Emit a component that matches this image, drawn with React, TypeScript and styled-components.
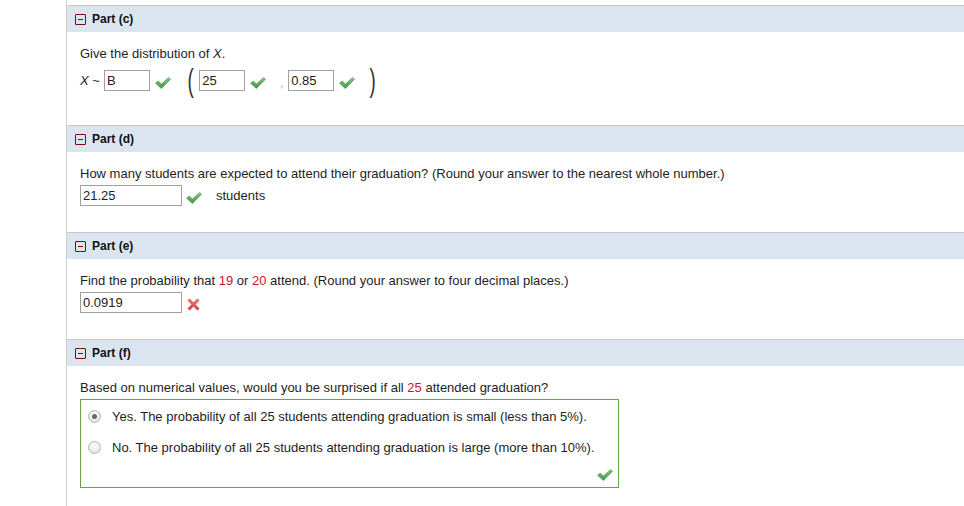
import React from "react";
import styled, { createGlobalStyle } from "styled-components";

const Global = createGlobalStyle`
  html, body { margin: 0; padding: 0; background: #fff; }
  body { font-family: "Liberation Sans", Arial, sans-serif; font-size: 13px; color: #1e1e1e; }
`;

const Page = styled.div`
  margin-left: 66px;
  border-left: 1px solid #cfcfcf;
  min-height: 506px;
  padding-top: 5px;
  box-sizing: border-box;
`;

const Section = styled.section``;

const Header = styled.div`
  border-top: 1px solid #c8c8c8;
  background: #dae5ef;
  height: 26px;
  display: flex;
  align-items: center;
  padding-left: 8px;
  font-size: 12px;
  font-weight: bold;
  color: #111;
`;

const Minus = styled.span`
  width: 9px;
  height: 9px;
  border: 1px solid #7a0a0a;
  border-radius: 1px;
  margin-right: 6px;
  position: relative;
  display: inline-block;
  &::after {
    content: "";
    position: absolute;
    left: 2px;
    right: 2px;
    top: 4px;
    height: 1px;
    background: #7a0a0a;
  }
`;

const Body = styled.div`
  padding: 14px 13px 26px;
`;

const Line = styled.div`
  line-height: 16px;
  height: 16px;
  white-space: nowrap;
`;

const Red = styled.span`
  color: #d0112b;
`;

const Row = styled.div`
  display: flex;
  align-items: center;
  height: 31px;
  margin: 3px 0;
`;

const InputRow = styled.div`
  display: flex;
  align-items: center;
  margin-top: 3px;
  height: 21px;
`;

const Field = styled.div<{ $w: number }>`
  width: ${(p) => p.$w}px;
  height: 21px;
  box-sizing: border-box;
  border: 1px solid #a0a0a0;
  padding: 0 2px;
  line-height: 19px;
  font-size: 13px;
  color: #222;
  background: #fff;
`;

const Italic = styled.i``;

const Label = styled.span<{ $ml?: number; $mr?: number }>`
  margin-left: ${(p) => p.$ml ?? 0}px;
  margin-right: ${(p) => p.$mr ?? 0}px;
`;

const Paren = styled.span<{ $ml: number; $mr: number }>`
  display: inline-block;
  font-size: 22px;
  font-weight: 300;
  color: #333;
  transform: scale(0.85, 1.45);
  margin-left: ${(p) => p.$ml}px;
  margin-right: ${(p) => p.$mr}px;
  line-height: 22px;
`;

const Comma = styled.span`
  color: #888;
  font-size: 11px;
  margin: 4px 5px 0 0;
`;

const IconWrap = styled.span<{ $ml: number; $mr?: number; $dy?: number }>`
  display: inline-flex;
  margin-left: ${(p) => p.$ml}px;
  margin-right: ${(p) => p.$mr ?? 0}px;
  position: relative;
  top: ${(p) => p.$dy ?? 0}px;
`;

const Check = ({ ml, mr, dy }: { ml: number; mr?: number; dy?: number }) => (
  <IconWrap $ml={ml} $mr={mr} $dy={dy}>
    <svg width="16" height="12" viewBox="0 0 16 12">
      <defs>
        <linearGradient id="cg" x1="0" y1="0" x2="0" y2="1">
          <stop offset="0" stopColor="#86c986" />
          <stop offset="1" stopColor="#3f943f" />
        </linearGradient>
      </defs>
      <path d="M0.5 6.2 L3.2 4 L6.4 6.9 L13.6 0.4 L15.6 2.2 L6.4 11.6 Z" fill="url(#cg)" stroke="#4a9a4a" strokeWidth="0.6" strokeLinejoin="round" />
    </svg>
  </IconWrap>
);

const Cross = ({ ml, dy }: { ml: number; dy?: number }) => (
  <IconWrap $ml={ml} $dy={dy}>
    <svg width="13" height="13" viewBox="0 0 13 13">
      <defs>
        <linearGradient id="xg" x1="0" y1="0" x2="0" y2="1">
          <stop offset="0" stopColor="#f87a7a" />
          <stop offset="1" stopColor="#e0353b" />
        </linearGradient>
      </defs>
      <path
        d="M0.8 2.6 L2.6 0.8 L6.5 4.7 L10.4 0.8 L12.2 2.6 L8.3 6.5 L12.2 10.4 L10.4 12.2 L6.5 8.3 L2.6 12.2 L0.8 10.4 L4.7 6.5 Z"
        fill="url(#xg)"
        stroke="#d9474c"
        strokeWidth="0.5"
        strokeLinejoin="round"
      />
    </svg>
  </IconWrap>
);

const ChoiceBox = styled.div`
  margin-top: 3px;
  width: 539px;
  height: 89px;
  box-sizing: border-box;
  border: 1px solid #6aa341;
  padding: 6px 0 6px 7px;
  display: flex;
  flex-direction: column;
`;

const Choice = styled.div`
  display: flex;
  align-items: center;
  height: 20px;
  & + & {
    margin-top: 11px;
  }
`;

const Radio = styled.span<{ $checked?: boolean }>`
  width: 11px;
  height: 11px;
  border-radius: 50%;
  border: 1px solid #b5b5b5;
  background: radial-gradient(circle at 50% 35%, #ffffff 0%, #e6e6e6 70%, #d4d4d4 100%);
  margin-right: 11px;
  position: relative;
  display: inline-block;
  &::after {
    content: "";
    display: ${(p) => (p.$checked ? "block" : "none")};
    position: absolute;
    width: 5px;
    height: 5px;
    border-radius: 50%;
    background: #6a6a6a;
    left: 3px;
    top: 3px;
  }
`;

const BoxFoot = styled.div`
  margin-top: auto;
  display: flex;
  justify-content: flex-end;
  padding-right: 5px;
`;

function SectionHead({ label }: { label: string }) {
  return (
    <Header>
      <Minus />
      {label}
    </Header>
  );
}

export default function App() {
  return (
    <>
      <Global />
      <Page>
        <Section>
          <SectionHead label="Part (c)" />
          <Body>
            <Line>
              Give the distribution of <Italic>X</Italic>.
            </Line>
            <Row>
              <Label $mr={4}>
                <Italic>X</Italic> ~
              </Label>
              <Field $w={46}>B</Field>
              <Check ml={5} dy={2} />
              <Paren $ml={16} $mr={5}>(</Paren>
              <Field $w={46}>25</Field>
              <Check ml={5} dy={2} />
              <Label $ml={14} />
              <Comma>,</Comma>
              <Field $w={46}>0.85</Field>
              <Check ml={5} dy={2} />
              <Paren $ml={14} $mr={0}>)</Paren>
            </Row>
          </Body>
        </Section>

        <Section>
          <SectionHead label="Part (d)" />
          <Body>
            <Line>
              How many students are expected to attend their graduation? (Round your answer to the nearest whole
              number.)
            </Line>
            <InputRow>
              <Field $w={102}>21.25</Field>
              <Check ml={4} dy={2} />
              <Label $ml={14}>students</Label>
            </InputRow>
          </Body>
        </Section>

        <Section>
          <SectionHead label="Part (e)" />
          <Body>
            <Line>
              Find the probability that <Red>19</Red> or <Red>20</Red> attend. (Round your answer to four decimal
              places.)
            </Line>
            <InputRow>
              <Field $w={102}>0.0919</Field>
              <Cross ml={5} dy={2} />
            </InputRow>
          </Body>
        </Section>

        <Section>
          <SectionHead label="Part (f)" />
          <Body>
            <Line>
              Based on numerical values, would you be surprised if all <Red>25</Red> attended graduation?
            </Line>
            <ChoiceBox>
              <Choice>
                <Radio $checked />
                Yes. The probability of all 25 students attending graduation is small (less than 5%).
              </Choice>
              <Choice>
                <Radio />
                No. The probability of all 25 students attending graduation is large (more than 10%).
              </Choice>
              <BoxFoot>
                <Check ml={0} />
              </BoxFoot>
            </ChoiceBox>
          </Body>
        </Section>
      </Page>
    </>
  );
}
